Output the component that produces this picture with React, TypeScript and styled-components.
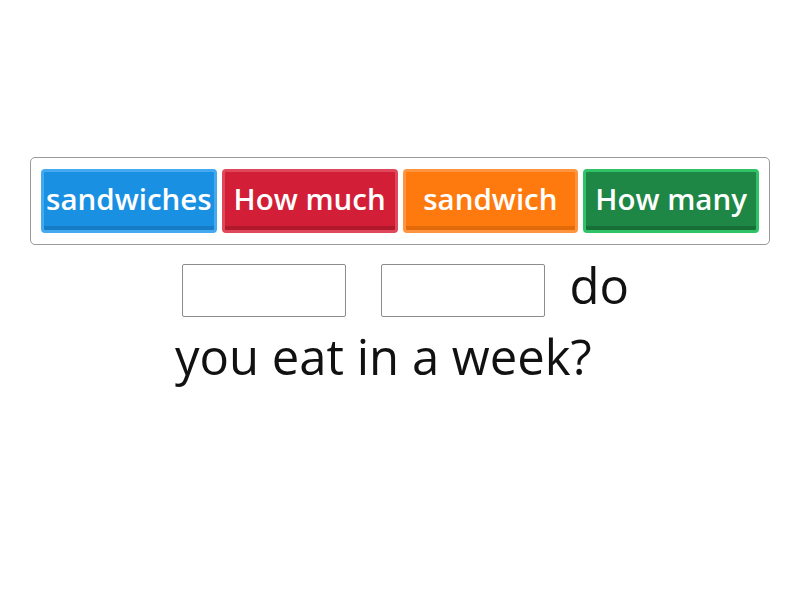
import React from "react";
import styled, { createGlobalStyle } from "styled-components";

const GlobalStyle = createGlobalStyle`
  html, body {
    margin: 0;
    padding: 0;
    background: #ffffff;
    font-family: "Open Sans", "Liberation Sans", sans-serif;
  }
`;

const Page = styled.div`
  width: 800px;
  height: 600px;
  padding-top: 157px;
  box-sizing: border-box;
`;

const Bank = styled.div`
  margin: 0 30px;
  height: 88px;
  box-sizing: border-box;
  border: 1px solid #9a9a9a;
  border-radius: 5px;
  padding: 11px 10px 11px 10px;
  display: flex;
  gap: 5px;
`;

type Palette = { main: string; light: string; dark: string };

const palettes: Record<string, Palette> = {
  blue: { main: "#1a90e3", light: "#45a9ef", dark: "#167cc6" },
  red: { main: "#d21e36", light: "#e0475a", dark: "#b0182c" },
  orange: { main: "#ff7a0e", light: "#ff9440", dark: "#e26a08" },
  green: { main: "#1e8745", light: "#2fc266", dark: "#176f38" },
};

const Tile = styled.div<{ $tone: Palette }>`
  flex: 1;
  height: 64px;
  box-sizing: border-box;
  border: 3px solid ${(p) => p.$tone.light};
  border-radius: 4px;
  background: ${(p) => p.$tone.main};
  box-shadow: inset 0 -4px 0 ${(p) => p.$tone.dark};
  display: flex;
  align-items: center;
  justify-content: center;
  padding-bottom: 5px;
  color: #ffffff;
  font-size: 29.5px;
  font-weight: 600;
  white-space: nowrap;
  overflow: hidden;
`;

const Sentence = styled.div`
  width: 520px;
  margin: 5px 0 0 175px;
  font-size: 49px;
  line-height: 71px;
  color: #111111;
`;

const Blank = styled.span<{ $last?: boolean }>`
  display: inline-block;
  width: 164px;
  height: 53px;
  box-sizing: border-box;
  border: 1px solid #8c8c8c;
  border-radius: 2px;
  margin: 0 ${(p) => (p.$last ? 12 : 15)}px 0 7px;
  vertical-align: middle;
`;

const tiles = [
  { text: "sandwiches", tone: "blue" },
  { text: "How much", tone: "red" },
  { text: "sandwich", tone: "orange" },
  { text: "How many", tone: "green" },
];

const App = () => {
  return (
    <Page>
      <GlobalStyle />
      <Bank>
        {tiles.map((t) => (
          <Tile key={t.text} $tone={palettes[t.tone]}>
            {t.text}
          </Tile>
        ))}
      </Bank>
      <Sentence>
        <Blank /> <Blank $last /> do you eat in a week?
      </Sentence>
    </Page>
  );
};

export default App;
